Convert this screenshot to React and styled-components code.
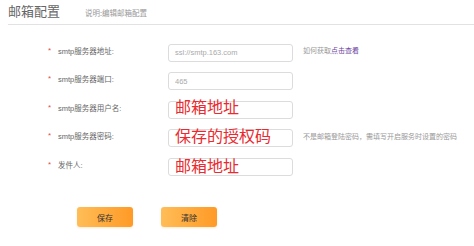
import styled, { createGlobalStyle } from "styled-components";

const GlobalStyle = createGlobalStyle`
  html, body {
    margin: 0;
    padding: 0;
    background: #fff;
  }
  body {
    font-family: "Liberation Sans", "Noto Sans CJK SC", sans-serif;
    color: #555;
  }
`;

const fields = [
  { label: "smtp服务器地址:", placeholder: "ssl://smtp.163.com", hint: "link" },
  { label: "smtp服务器端口:", placeholder: "465" },
  { label: "smtp服务器用户名:", note: "邮箱地址" },
  { label: "smtp服务器密码:", note: "保存的授权码", hint: "password" },
  { label: "发件人:", note: "邮箱地址", noteOffset: 2 },
];

const App = () => {
  return (
    <Page>
      <GlobalStyle />
      <Header>
        <Title>邮箱配置</Title>
        <Subtitle>说明:编辑邮箱配置</Subtitle>
      </Header>
      <Form>
        {fields.map((f) => (
          <Row key={f.label}>
            <Label>
              <Star>*</Star>
              {f.label}
            </Label>
            <InputWrap>
              <Input placeholder={f.placeholder || ""} />
              {f.note && <Note $offset={f.noteOffset || 0}>{f.note}</Note>}
            </InputWrap>
            {f.hint === "link" && (
              <Hint>
                如何获取<HintLink>点击查看</HintLink>
              </Hint>
            )}
            {f.hint === "password" && <Hint>不是邮箱登陆密码，需填写开启服务时设置的密码</Hint>}
          </Row>
        ))}
      </Form>
      <Actions>
        <ActionButton>保存</ActionButton>
        <ActionButton>清除</ActionButton>
      </Actions>
    </Page>
  );
};
export default App;

const Page = styled.div`
  width: 474px;
  height: 246px;
  overflow: hidden;
`;

const Header = styled.div`
  display: flex;
  align-items: center;
  margin-left: 8px;
  height: 24px;
  border-bottom: 1px solid #e2e2e2;
`;

const Title = styled.h1`
  margin: -4px 0 0;
  font-family: "Noto Sans CJK SC", sans-serif;
  font-size: 13px;
  font-weight: 400;
  color: #666;
  line-height: 1;
`;

const Subtitle = styled.span`
  margin-left: 25px;
  font-family: "Noto Sans CJK SC", sans-serif;
  font-size: 7.5px;
  color: #999;
`;

const Form = styled.div`
  display: flex;
  flex-direction: column;
  gap: 10.5px;
  padding-top: 16px;
`;

const Row = styled.div`
  display: flex;
  align-items: center;
  height: 18px;
`;

const Label = styled.label`
  display: flex;
  align-items: center;
  width: 120px;
  padding-left: 48px;
  font-size: 7.5px;
  color: #666;
`;

const Star = styled.span`
  color: #e0504a;
  font-size: 8px;
  width: 10px;
`;

const InputWrap = styled.div`
  position: relative;
  width: 125px;
  height: 18px;
`;

const Input = styled.input`
  box-sizing: border-box;
  width: 100%;
  height: 100%;
  border: 1px solid #dcdcdc;
  border-radius: 3px;
  padding: 0 6px;
  font-family: "Liberation Sans", sans-serif;
  font-size: 7.5px;
  color: #555;
  outline: none;
  &::placeholder {
    color: #aaa;
  }
`;

const Note = styled.span`
  position: absolute;
  left: 7px;
  top: ${(p) => -2 + p.$offset}px;
  font-family: "Noto Sans CJK SC", sans-serif;
  font-size: 16px;
  line-height: 20px;
  color: #ea2a2e;
  white-space: nowrap;
  pointer-events: none;
`;

const Hint = styled.span`
  margin-left: 10px;
  font-family: "Noto Sans CJK SC", sans-serif;
  font-size: 7px;
  color: #999;
`;

const HintLink = styled.a`
  color: #6b3fa0;
  cursor: pointer;
`;

const Actions = styled.div`
  display: flex;
  gap: 28px;
  padding-left: 77px;
  margin-top: 34px;
`;

const ActionButton = styled.button`
  width: 56px;
  height: 20px;
  border: none;
  border-radius: 3px;
  background: linear-gradient(90deg, #ffbd57, #ff9a26);
  font-family: "Noto Sans CJK SC", sans-serif;
  font-size: 8px;
  color: #333;
  cursor: pointer;
  box-shadow: 0 1px 2px rgba(255, 150, 40, 0.2);
`;
